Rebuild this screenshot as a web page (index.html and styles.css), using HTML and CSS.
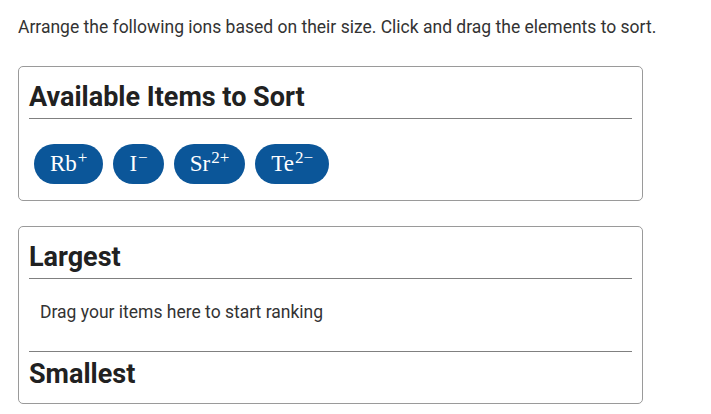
FILE: index.html
```html
<!DOCTYPE html>
<html lang="en">
<head>
<meta charset="utf-8">
<title>Sort ions</title>
<link rel="stylesheet" href="styles.css">
</head>
<body>
<div class="page">
  <p class="prompt">Arrange the following ions based on their size. Click and drag the elements to sort.</p>

  <section class="box">
    <h2 class="box-title">Available Items to Sort</h2>
    <div class="pills">
      <span class="pill">Rb<sup>+</sup></span>
      <span class="pill">I<sup>−</sup></span>
      <span class="pill">Sr<sup>2+</sup></span>
      <span class="pill">Te<sup>2−</sup></span>
    </div>
  </section>

  <section class="box rank">
    <h2 class="box-title">Largest</h2>
    <div class="drop">Drag your items here to start ranking</div>
    <h2 class="box-title bottom">Smallest</h2>
  </section>
</div>
</body>
</html>
```

FILE: styles.css
```css
html, body {
  margin: 0;
  padding: 0;
  background: #ffffff;
}

body {
  font-family: Roboto, "Liberation Sans", sans-serif;
  color: #212121;
}

.page {
  padding: 0 18px;
}

.prompt {
  margin: 15px 0 27px;
  font-size: 17.5px;
  line-height: 24px;
  color: #333333;
}

.box {
  width: 603px;
  border: 1px solid #9a9a9a;
  border-radius: 5px;
  padding: 0 10px 16px;
  margin-bottom: 25px;
}

.box-title {
  margin: 14px 0 0;
  padding: 1px 0 6px;
  font-size: 27px;
  line-height: 30px;
  font-weight: 700;
  color: #212121;
  border-bottom: 1px solid #808080;
}

.pills {
  display: flex;
  gap: 10px;
  margin: 25px 0 0 5px;
}

.pill {
  display: inline-flex;
  align-items: center;
  height: 40px;
  padding: 0 16px;
  border-radius: 20px;
  background: #0b5699;
  color: #ffffff;
  font-family: "Liberation Serif", "Times New Roman", serif;
  font-size: 23px;
}

.pill sup {
  font-size: 17px;
  line-height: 0;
  position: relative;
  top: -6px;
  margin-left: 1px;
}

.rank {
  padding-bottom: 14px;
}

.drop {
  padding: 21px 11px 0;
  height: 51px;
  font-size: 17.5px;
  line-height: 24px;
  color: #333333;
  border-bottom: 1px solid #808080;
}

.box-title.bottom {
  margin-top: 6px;
  padding-bottom: 0;
  border-bottom: none;
}
```
